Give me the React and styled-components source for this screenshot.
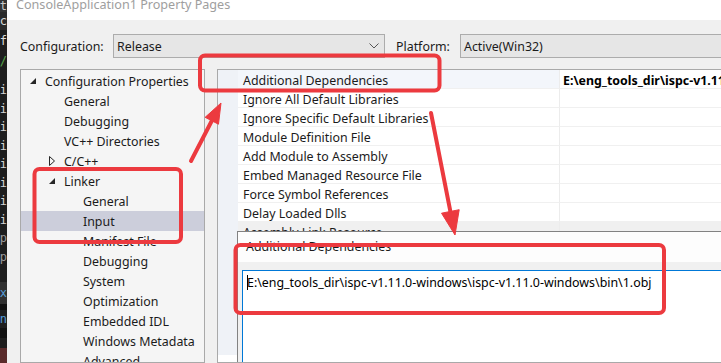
import React from 'react';
import styled, { createGlobalStyle } from 'styled-components';

const GlobalStyle = createGlobalStyle`
  html, body { margin: 0; padding: 0; overflow: hidden; background: #f0f0f0; }
  #root { width: 721px; height: 363px; }
`;

const UI_FONT = `"Noto Sans", "Open Sans", sans-serif`;
const RED = '#ec3a3f';

const Screen = styled.div`
  position: relative;
  display: flex;
  width: 721px;
  height: 363px;
  overflow: hidden;
  font-family: ${UI_FONT};
  font-size: 12.4px;
  color: #1b1b1b;
`;

/* ---- code editor strip at the left ---- */
const Editor = styled.div`
  flex: none;
  width: 7px;
  background: #1e1e1e;
  display: flex;
  flex-direction: column;
  overflow: hidden;
  font-family: "DejaVu Sans Mono", monospace;
  font-size: 12px;
`;

const CodeLine = styled.div`
  flex: none;
  height: ${(p) => p.$h}px;
  line-height: ${(p) => p.$h}px;
  display: flex;
  justify-content: flex-end;
  overflow: hidden;
  white-space: nowrap;
  background: ${(p) => p.$bg || 'transparent'};
  color: ${(p) => p.$color || '#d4d4d4'};
`;

/* ---- dialog ---- */
const Dialog = styled.div`
  flex: none;
  width: 840px;
  display: flex;
  flex-direction: column;
  background: #f0f0f0;
`;

const TitleBar = styled.div`
  flex: none;
  height: 20px;
  background: #ffffff;
  padding-left: 9px;
  color: #9e9e9e;
  font-size: 12.6px;
  line-height: 12px;
  overflow: hidden;
`;

const TitleText = styled.div`
  margin-top: -1px;
  white-space: nowrap;
`;

const Body = styled.div`
  flex: 1;
  min-height: 0;
  display: flex;
  flex-direction: column;
  padding: 14px 0 0 13px;
`;

const ConfigRow = styled.div`
  flex: none;
  display: flex;
  align-items: center;
  height: 24px;
`;

const FieldLabel = styled.span`
  flex: none;
  width: ${(p) => p.$w}px;
  white-space: nowrap;
`;

const Combo = styled.div`
  box-sizing: border-box;
  height: 24px;
  flex: ${(p) => (p.$w ? 'none' : '1')};
  width: ${(p) => (p.$w ? `${p.$w}px` : 'auto')};
  margin-right: ${(p) => p.$mr || 0}px;
  border: 1px solid #acacac;
  background: #e6e6e6;
  display: flex;
  align-items: center;
  padding: 0 5px 0 3px;
  white-space: nowrap;
`;

const ComboText = styled.span`
  flex: 1;
`;

const Content = styled.div`
  flex: 1;
  min-height: 0;
  display: flex;
  gap: 12px;
  margin-top: 11px;
`;

/* ---- tree ---- */
const Tree = styled.div`
  flex: none;
  width: 185px;
  box-sizing: border-box;
  border: 1px solid #a9a9a9;
  background: #f5f5f5;
  padding-top: 1px;
  display: flex;
  flex-direction: column;
  overflow: hidden;
`;

const TreeRow = styled.div`
  flex: none;
  height: 20px;
  display: flex;
  align-items: center;
  padding-left: ${(p) => 9 + p.$level * 19}px;
  background: ${(p) => (p.$selected ? '#cccedb' : 'transparent')};
  white-space: nowrap;
`;

const Expander = styled.span`
  flex: none;
  width: 15px;
  height: 20px;
  display: flex;
  align-items: center;
`;

/* ---- property grid ---- */
const Grid = styled.div`
  flex: 1;
  position: relative;
  box-sizing: border-box;
  border: 1px solid #a9a9a9;
  border-right: none;
  background: #ffffff;
  display: flex;
  flex-direction: column;
  overflow: hidden;
`;

const GridRow = styled.div`
  flex: none;
  display: grid;
  grid-template-columns: 20px 321px 1fr;
  height: 19px;
`;

const Gutter = styled.div`
  background: #eff2f7;
`;

const NameCell = styled.div`
  box-sizing: border-box;
  border-bottom: 1px solid #f0f0f0;
  padding: 2px 0 0 5px;
  line-height: 18px;
  white-space: nowrap;
  overflow: hidden;
  background: ${(p) => (p.$active ? '#f3f6fb' : p.$shade ? '#f0f0f0' : '#ffffff')};
`;

const ValueCell = styled.div`
  box-sizing: border-box;
  border-left: 1px solid #ececec;
  border-bottom: 1px solid #f0f0f0;
  padding: 2px 0 0 3px;
  line-height: 18px;
  white-space: nowrap;
  overflow: hidden;
  font-weight: 700;
  color: #000;
  background: ${(p) => (p.$shade ? '#f0f0f0' : '#ffffff')};
`;

/* ---- popup editor window ---- */
const Popup = styled.div`
  position: absolute;
  left: 19px;
  top: 161px;
  right: -40px;
  bottom: -40px;
  border: 1px solid #828282;
  background: #f0f0f0;
  display: flex;
  flex-direction: column;
`;

const PopupHeader = styled.div`
  flex: none;
  height: 30px;
  box-sizing: border-box;
  background: #fdfdfd;
  padding: 7px 0 0 8px;
  line-height: 16px;
  white-space: nowrap;
`;

const PopupBody = styled.div`
  flex: 1;
  display: flex;
  padding: 8px 0 0 4px;
`;

const TextBox = styled.div`
  flex: 1;
  background: #ffffff;
  border: 1px solid #0078d7;
  padding: 4px;
  line-height: 16px;
  white-space: nowrap;
  color: #000;
`;

const Caret = styled.span`
  display: inline-block;
  width: 1px;
  height: 15px;
  background: #000;
  vertical-align: -3px;
  margin-right: -1px;
`;

/* ---- annotation overlay ---- */
const Annotations = styled.svg`
  position: absolute;
  left: 0;
  top: 0;
  width: 721px;
  height: 363px;
  pointer-events: none;
`;

function Arrow({ x1, y1, x2, y2, head = 22, half = 8 }) {
  const dx = x2 - x1;
  const dy = y2 - y1;
  const len = Math.hypot(dx, dy);
  const ux = dx / len;
  const uy = dy / len;
  const bx = x2 - ux * head;
  const by = y2 - uy * head;
  const nx = -uy;
  const ny = ux;
  const pts = `${x2},${y2} ${bx + nx * half},${by + ny * half} ${bx - nx * half},${by - ny * half}`;
  return (
    <g>
      <line x1={x1} y1={y1} x2={bx + ux * 2} y2={by + uy * 2} stroke={RED} strokeWidth="4" strokeLinecap="round" />
      <polygon points={pts} fill={RED} stroke={RED} strokeWidth="1" strokeLinejoin="round" />
    </g>
  );
}

const OpenGlyph = () => (
  <svg width="6" height="6" viewBox="0 0 6 6">
    <polygon points="6,0 6,6 0,6" fill="#262626" />
  </svg>
);

const ClosedGlyph = () => (
  <svg width="6" height="10" viewBox="0 0 6 10">
    <polygon points="0.5,0.5 5.5,5 0.5,9.5" fill="none" stroke="#262626" strokeWidth="1" />
  </svg>
);

const ChevronDown = () => (
  <svg width="10" height="6" viewBox="0 0 10 6">
    <polyline points="0.5,0.5 5,5 9.5,0.5" fill="none" stroke="#555" strokeWidth="1" />
  </svg>
);

const codeLines = [
  { h: 12, t: 'int', bg: '#343434', color: '#c8c8c8' },
  { h: 18, t: 'static', bg: '#2b2b2b', color: '#dcdcdc' },
  { h: 22, t: 'printf', color: '#dcdcdc' },
  { h: 19, t: '//', color: '#57a64a' },
  { h: 10, t: '' },
  { h: 18.5, t: 'pri' },
  { h: 18.5, t: 'pri' },
  { h: 18.5, t: 'pri' },
  { h: 18.5, t: 'pri' },
  { h: 18.5, t: 'pri' },
  { h: 18.5, t: 'pri' },
  { h: 18.5, t: 'pri' },
  { h: 18.5, t: 'pri' },
  { h: 18.5, t: 'scanf_sp', color: '#9b9b9b' },
  { h: 18.5, t: 'scanf_sp', color: '#9b9b9b' },
  { h: 16, t: '' },
  { h: 22, t: 'x', bg: '#303030', color: '#569cd6' },
  { h: 6, t: '', bg: '#111' },
  { h: 18, t: 'n', color: '#569cd6' },
  { h: 10, t: '', bg: '#111' },
  { h: 10, t: '' },
  { h: 30, t: '', bg: '#5a2b2b' },
];

const treeItems = [
  { label: 'Configuration Properties', level: 0, exp: 'open' },
  { label: 'General', level: 1 },
  { label: 'Debugging', level: 1 },
  { label: 'VC++ Directories', level: 1 },
  { label: 'C/C++', level: 1, exp: 'closed' },
  { label: 'Linker', level: 1, exp: 'open' },
  { label: 'General', level: 2 },
  { label: 'Input', level: 2, selected: true },
  { label: 'Manifest File', level: 2 },
  { label: 'Debugging', level: 2 },
  { label: 'System', level: 2 },
  { label: 'Optimization', level: 2 },
  { label: 'Embedded IDL', level: 2 },
  { label: 'Windows Metadata', level: 2 },
  { label: 'Advanced', level: 2 },
  { label: 'All Options', level: 2 },
];

const PATH = 'E:\\eng_tools_dir\\ispc-v1.11.0-windows\\ispc-v1.11.0-windows\\bin\\1.obj';

const properties = [
  { name: 'Additional Dependencies', value: PATH + ';%(AdditionalDependencies)', active: true },
  { name: 'Ignore All Default Libraries' },
  { name: 'Ignore Specific Default Libraries' },
  { name: 'Module Definition File' },
  { name: 'Add Module to Assembly' },
  { name: 'Embed Managed Resource File' },
  { name: 'Force Symbol References' },
  { name: 'Delay Loaded Dlls' },
  { name: 'Assembly Link Resource', shade: true },
  { name: '' },
  { name: '' },
  { name: '' },
  { name: '' },
  { name: '' },
  { name: '' },
];

export default function App() {
  return (
    <>
      <GlobalStyle />
      <Screen>
        <Editor>
          {codeLines.map((l, i) => (
            <CodeLine key={i} $h={l.h} $bg={l.bg} $color={l.color}>
              {l.t}
            </CodeLine>
          ))}
        </Editor>

        <Dialog>
          <TitleBar>
            <TitleText>ConsoleApplication1 Property Pages</TitleText>
          </TitleBar>
          <Body>
            <ConfigRow>
              <FieldLabel $w={93}>Configuration:</FieldLabel>
              <Combo $w={272} $mr={11}>
                <ComboText>Release</ComboText>
                <ChevronDown />
              </Combo>
              <FieldLabel $w={64}>Platform:</FieldLabel>
              <Combo>
                <ComboText>Active(Win32)</ComboText>
              </Combo>
            </ConfigRow>

            <Content>
              <Tree>
                {treeItems.map((it, i) => (
                  <TreeRow key={i} $level={it.level} $selected={it.selected}>
                    <Expander>
                      {it.exp === 'open' && <OpenGlyph />}
                      {it.exp === 'closed' && <ClosedGlyph />}
                    </Expander>
                    {it.label}
                  </TreeRow>
                ))}
              </Tree>

              <Grid>
                {properties.map((p, i) => (
                  <GridRow key={i}>
                    <Gutter />
                    <NameCell $active={p.active} $shade={p.shade}>{p.name}</NameCell>
                    <ValueCell $shade={p.shade}>{p.value || ''}</ValueCell>
                  </GridRow>
                ))}

                <Popup>
                  <PopupHeader>Additional Dependencies</PopupHeader>
                  <PopupBody>
                    <TextBox>
                      <Caret />
                      {PATH}
                    </TextBox>
                  </PopupBody>
                </Popup>
              </Grid>
            </Content>
          </Body>
        </Dialog>

        <Annotations viewBox="0 0 721 363">
          <rect x="200" y="55.5" width="239.5" height="35" rx="5" fill="none" stroke={RED} strokeWidth="4" />
          <rect x="34.5" y="169" width="146.5" height="73" rx="5" fill="none" stroke={RED} strokeWidth="4" />
          <rect x="235.5" y="245" width="428.5" height="68" rx="5" fill="none" stroke={RED} strokeWidth="4" />
          <Arrow x1={191} y1={161} x2={221} y2={103} head={20} half={7.5} />
          <Arrow x1={431} y1={113} x2={455} y2={235} head={24} half={9} />
        </Annotations>
      </Screen>
    </>
  );
}
